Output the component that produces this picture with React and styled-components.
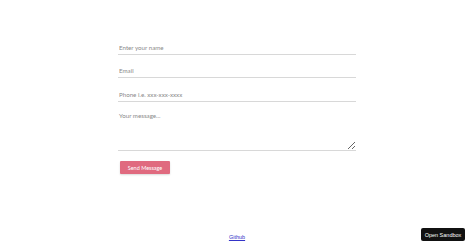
import React from 'react';
import styled, { createGlobalStyle } from 'styled-components';

const GlobalStyle = createGlobalStyle`
  html, body {
    margin: 0;
    padding: 0;
    background: #fff;
  }
  body {
    font-family: Lato, "Open Sans", sans-serif;
  }
`;

const Page = styled.div`
  min-height: 248px;
  display: flex;
  flex-direction: column;
  align-items: center;
  box-sizing: border-box;
`;

const Form = styled.form`
  width: 238px;
  padding-top: 32px;
  display: flex;
  flex-direction: column;
  align-items: flex-start;
`;

const fieldStyle = `
  width: 100%;
  box-sizing: border-box;
  margin: 11px 0 0;
  border: none;
  border-bottom: 1px solid #d8d8d8;
  outline: none;
  background: transparent;
  font-family: Lato, "Open Sans", sans-serif;
  font-weight: 400;
  font-size: 6.2px;
  color: #555;
  padding: 0 1px;

  &::placeholder {
    color: #8a8a8a;
  }
`;

const Input = styled.input`
  ${fieldStyle}
  height: 12px;
  padding-bottom: 3px;

  &:nth-of-type(3) {
    margin-top: 12px;
  }
`;

const TextArea = styled.textarea`
  ${fieldStyle}
  margin-top: 8px;
  height: 41px;
  padding-top: 2px;
  resize: vertical;
`;

const SendButton = styled.button`
  margin: 10px 0 0 2px;
  width: 50px;
  height: 13px;
  padding: 0;
  border: none;
  border-radius: 1px;
  background: #e06a7f;
  color: #fff;
  font-family: Lato, "Open Sans", sans-serif;
  font-size: 5.5px;
  box-shadow: 0 1px 2px rgba(0, 0, 0, 0.15);
  cursor: pointer;
`;

const Footer = styled.footer`
  margin-top: auto;
  padding-bottom: 8px;
  font-family: "Liberation Sans", Arial, sans-serif;
  font-size: 5.5px;
`;

const GithubLink = styled.a`
  color: #3434c8;
  text-decoration: underline;
`;

const SandboxButton = styled.a`
  position: fixed;
  right: 9px;
  bottom: 7px;
  width: 44px;
  height: 13px;
  display: flex;
  align-items: center;
  justify-content: center;
  background: #111;
  color: #fff;
  border-radius: 2px;
  font-family: "Liberation Sans", Arial, sans-serif;
  font-size: 5.5px;
  text-decoration: none;
`;

export default function App() {
  return (
    <Page>
      <GlobalStyle />
      <Form onSubmit={e => e.preventDefault()}>
        <Input type="text" placeholder="Enter your name" />
        <Input type="email" placeholder="Email" />
        <Input type="tel" placeholder="Phone i.e. xxx-xxx-xxxx" />
        <TextArea placeholder="Your message..." />
        <SendButton type="submit">Send Message</SendButton>
      </Form>
      <Footer>
        <GithubLink href="#">Github</GithubLink>
      </Footer>
      <SandboxButton href="#">Open Sandbox</SandboxButton>
    </Page>
  );
}
